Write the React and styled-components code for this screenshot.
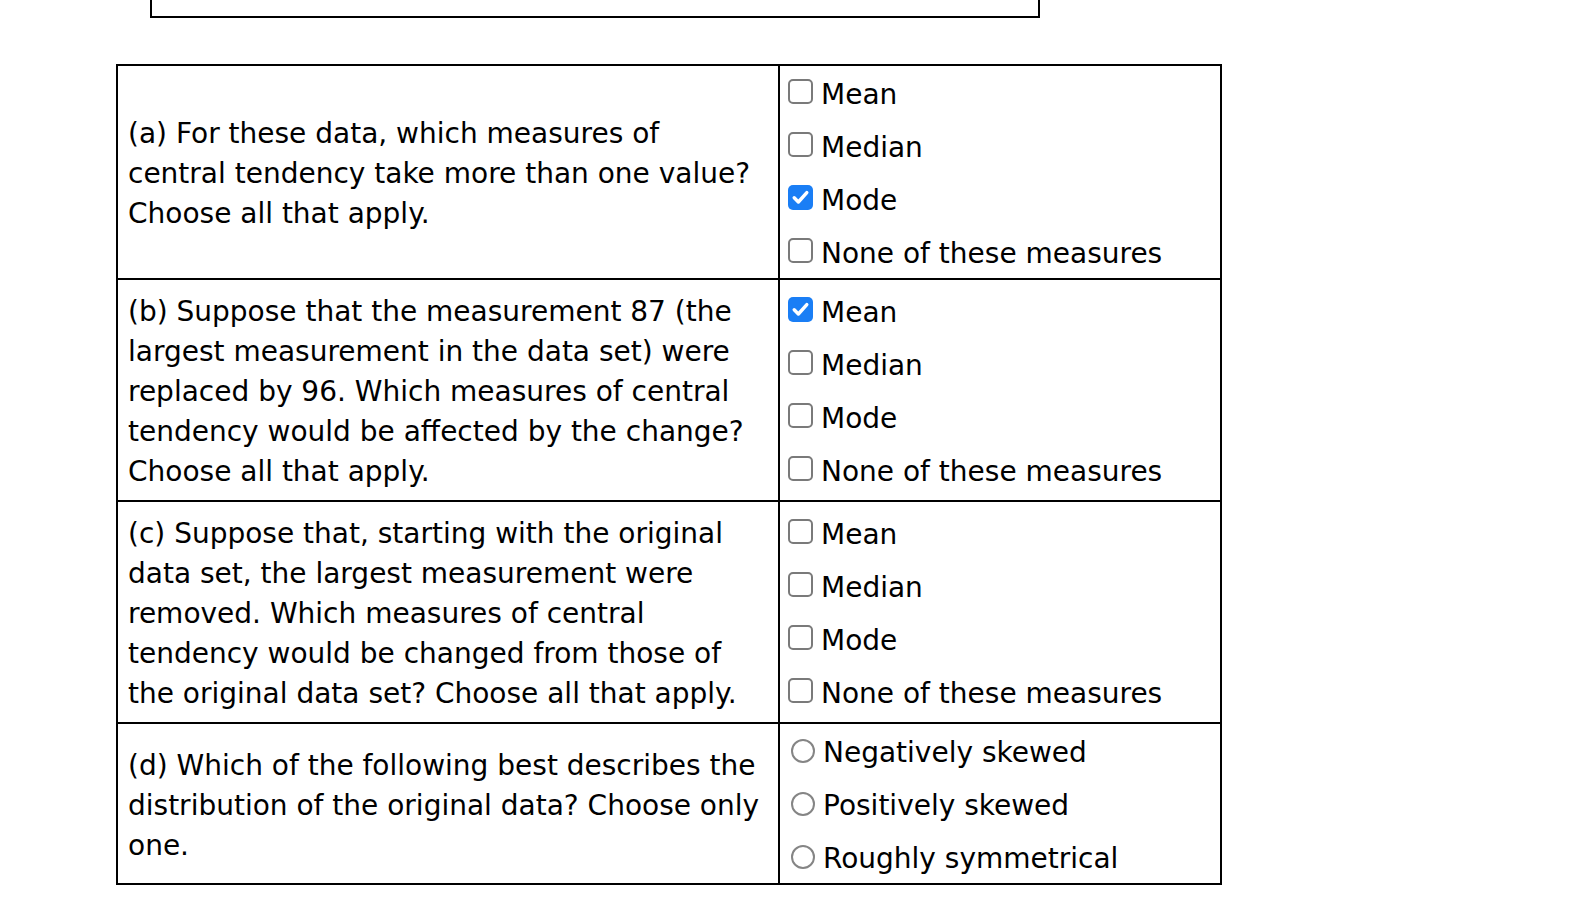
import styled, { createGlobalStyle } from "styled-components";

const GlobalStyle = createGlobalStyle`
  html, body {
    margin: 0;
    padding: 0;
    background: #fff;
  }
  body {
    font-family: "DejaVu Sans", Verdana, sans-serif;
    color: #000;
  }
`;

const questions = [
  {
    text: "(a) For these data, which measures of central tendency take more than one value? Choose all that apply.",
    type: "checkbox",
    options: ["Mean", "Median", "Mode", "None of these measures"],
    picked: ["Mode"],
  },
  {
    text: "(b) Suppose that the measurement 87 (the largest measurement in the data set) were replaced by 96. Which measures of central tendency would be affected by the change? Choose all that apply.",
    type: "checkbox",
    options: ["Mean", "Median", "Mode", "None of these measures"],
    picked: ["Mean"],
  },
  {
    text: "(c) Suppose that, starting with the original data set, the largest measurement were removed. Which measures of central tendency would be changed from those of the original data set? Choose all that apply.",
    type: "checkbox",
    options: ["Mean", "Median", "Mode", "None of these measures"],
    picked: [],
  },
  {
    text: "(d) Which of the following best describes the distribution of the original data? Choose only one.",
    type: "radio",
    options: ["Negatively skewed", "Positively skewed", "Roughly symmetrical"],
    picked: [],
  },
];

const Check = ({ checked }) => (
  <CheckBox $checked={checked}>
    {checked && (
      <svg width="25" height="25" viewBox="0 0 25 25">
        <path
          d="M6.2 12.8 L10.4 17 L18.8 7.6"
          fill="none"
          stroke="#fff"
          strokeWidth="3.4"
          strokeLinecap="round"
          strokeLinejoin="round"
        />
      </svg>
    )}
  </CheckBox>
);

const App = () => {
  return (
    <Page>
      <GlobalStyle />
      <TopBox />
      <Table>
        <colgroup>
          <col style={{ width: "662px" }} />
          <col style={{ width: "442px" }} />
        </colgroup>
        <tbody>
          {questions.map((q, i) => (
            <tr key={i}>
              <QuestionCell>{q.text}</QuestionCell>
              <AnswerCell>
                {q.options.map((opt) => (
                  <Option key={opt}>
                    {q.type === "checkbox" ? (
                      <Check checked={q.picked.includes(opt)} />
                    ) : (
                      <Radio />
                    )}
                    <Label>{opt}</Label>
                  </Option>
                ))}
              </AnswerCell>
            </tr>
          ))}
        </tbody>
      </Table>
    </Page>
  );
};

const Page = styled.div`
  padding: 0 0 40px 116px;
`;

const TopBox = styled.div`
  margin-left: 34px;
  width: 886px;
  height: 16px;
  border: 2px solid #000;
  border-top: none;
`;

const Table = styled.table`
  margin-top: 46px;
  width: 1104px;
  border-collapse: collapse;
  table-layout: fixed;
  border: 2px solid #000;
  td {
    border: 2px solid #000;
    vertical-align: middle;
  }
`;

const QuestionCell = styled.td`
  padding: 12px 16px 8px 10px;
  font-size: 28px;
  line-height: 40px;
`;

const AnswerCell = styled.td`
  padding: 0 8px;
`;

const Option = styled.div`
  display: flex;
  align-items: center;
  height: 53px;
  gap: 8px;
`;

const CheckBox = styled.span`
  flex: none;
  box-sizing: border-box;
  width: 25px;
  height: 25px;
  margin-top: -2px;
  border-radius: 5px;
  border: ${(p) => (p.$checked ? "none" : "2px solid #7a7a7a")};
  background: ${(p) => (p.$checked ? "#1a7ef5" : "#fff")};
  display: flex;
  align-items: center;
  justify-content: center;
`;

const Radio = styled.span`
  flex: none;
  box-sizing: border-box;
  width: 24px;
  height: 24px;
  margin: 0 0 0 3px;
  border-radius: 50%;
  border: 2px solid #858585;
  background: #fff;
`;

const Label = styled.span`
  padding-top: 4px;
  font-size: 28px;
  line-height: 40px;
  white-space: nowrap;
`;

export default App;
